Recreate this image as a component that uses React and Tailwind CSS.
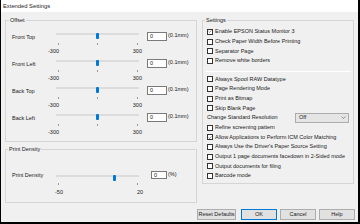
import React from "react";

// ================= SLIDER ROW =================
function SliderRow({ label, min, max, thumb, ticks, unit, dense }) {
  return (
    <div className={`flex items-start ${dense ? "h-[32px]" : "h-[27px]"}`}>
      <div className={`w-[44px] leading-[7px] ${dense ? "pt-[1px]" : "pt-[2px]"}`}>
        {label}
      </div>
      <div className={`w-[83px] ${dense ? "mt-[2px]" : ""}`}>
        <div className="relative h-[6px]">
          <div className="mt-[1.5px] h-[2px] bg-[#dcdcdc]" />
          <div
            className="absolute top-0 h-[6px] w-[3px] rounded-[1px] bg-[#0078d7]"
            style={{ left: thumb }}
          />
        </div>
        <div className={`flex justify-between px-[1.5px] ${dense ? "mt-[2px]" : "mt-[4px]"}`}>
          {ticks.map((t) => (
            <span key={t} className="h-[2px] w-[1px] bg-[#9a9a9a]" />
          ))}
        </div>
        <div
          className={`flex justify-between leading-[7px] ${
            dense ? "mt-[4px] ml-[-1px] mr-[-4px]" : "mt-[3px] ml-[-8px] mr-[-3px]"
          }`}
        >
          <span>{min}</span>
          <span>{max}</span>
        </div>
      </div>
      <div
        className={`flex items-center border border-[#7a7a7a] bg-white pl-[2px] leading-[7px] ${
          dense ? "ml-[12px] h-[8px] w-[16px]" : "ml-[8px] h-[9px] w-[20px]"
        }`}
      >
        0
      </div>
      <div className="ml-[1px] leading-[7px]">{unit}</div>
    </div>
  );
}

// ================= CHECKBOX =================
function Check({ label, checked }) {
  return (
    <div className="flex h-[9.6px] items-center pl-[4px]">
      <span className="flex h-[6px] w-[6px] items-center justify-center border border-[#333333] bg-white">
        {checked && (
          <svg viewBox="0 0 6 6" className="h-[5px] w-[5px]">
            <path
              d="M0.9 3 L2.3 4.4 L5.1 1.3"
              fill="none"
              stroke="#333333"
              strokeWidth="0.8"
            />
          </svg>
        )}
      </span>
      <span className="ml-[2px] leading-[7px]">{label}</span>
    </div>
  );
}

const offsetRows = ["Front Top", "Front Left", "Back Top", "Back Left"];

const settingsTop = [
  { label: "Enable EPSON Status Monitor 3", checked: true },
  { label: "Check Paper Width Before Printing" },
  { label: "Separator Page" },
  { label: "Remove white borders" },
];

const settingsMid = [
  { label: "Always Spool RAW Datatype" },
  { label: "Page Rendering Mode" },
  { label: "Print as Bitmap" },
  { label: "Skip Blank Page" },
];

const settingsBottom = [
  { label: "Refine screening pattern" },
  { label: "Allow Applications to Perform ICM Color Matching", checked: true },
  { label: "Always Use the Driver's Paper Source Setting" },
  { label: "Output 1 page documents facedown in 2-Sided mode" },
  { label: "Output documents for filing" },
  { label: "Barcode mode" },
];

export default function App() {
  return (
    <div className="flex h-[224px] w-[360px] flex-col border-b-2 border-l border-r-2 border-black bg-[#f0f0f0] font-['Liberation_Sans',Arial,sans-serif] text-[5.5px] text-[#1a1a1a]">
      {/* TITLE */}
      <div className="flex h-[12px] shrink-0 items-center bg-white pl-[2px] text-[5.8px]">
        Extended Settings
      </div>

      {/* BODY */}
      <div className="flex pl-[4px] pt-[4.5px]">
        <div className="flex w-[192px] flex-col">
          <fieldset className="h-[125.5px] border border-[#d5d5d5]">
            <legend className="ml-[3px] px-[1px] leading-[7px]">Offset</legend>
            <div className="mt-[8px] pl-[6px]">
              {offsetRows.map((r) => (
                <SliderRow
                  key={r}
                  label={r}
                  min="-300"
                  max="300"
                  thumb={40}
                  ticks={[0, 1, 2]}
                  unit="(0.1mm)"
                />
              ))}
            </div>
          </fieldset>

          <fieldset className="mt-[3.5px] h-[57.5px] border border-[#d5d5d5]">
            <legend className="ml-[2px] px-[1px] leading-[7px]">Print Density</legend>
            <div className="mt-[18.5px] pl-[6px]">
              <SliderRow
                label="Print Density"
                min="-50"
                max="20"
                thumb={57}
                ticks={[0, 1]}
                unit="(%)"
                dense
              />
            </div>
          </fieldset>
        </div>

        <fieldset className="ml-[5px] h-[167.5px] w-[152px] border border-[#d5d5d5]">
          <legend className="ml-[2px] px-[1px] leading-[7px]">Settings</legend>
          <div className="mt-[3.7px]">
            {settingsTop.map((s) => (
              <Check key={s.label} {...s} />
            ))}
          </div>
          <div className="mx-[2px] mt-[5.4px] h-[1px] border-b border-white bg-[#d5d5d5]" />
          <div className="mt-[2.6px]">
            {settingsMid.map((s) => (
              <Check key={s.label} {...s} />
            ))}
            <div className="flex h-[10px] items-center justify-between pl-[4px] pr-[4px]">
              <span className="leading-[7px]">Change Standard Resolution</span>
              <div className="flex h-[10px] w-[54px] items-center justify-between border border-[#acacac] bg-[#e5e5e5] pl-[3px] pr-[2px]">
                <span className="leading-[7px]">Off</span>
                <svg viewBox="0 0 6 4" className="h-[3px] w-[5px]">
                  <path d="M0.5 0.8 L3 3.2 L5.5 0.8" fill="none" stroke="#444444" strokeWidth="0.7" />
                </svg>
              </div>
            </div>
            {settingsBottom.map((s) => (
              <Check key={s.label} {...s} />
            ))}
          </div>
        </fieldset>
      </div>

      {/* BUTTONS */}
      <div className="mt-[6px] flex justify-end pr-[3px]">
        <button className="h-[11px] w-[39px] border border-[#adadad] bg-[#e1e1e1] leading-[7px]">
          Reset Defaults
        </button>
        <button className="ml-[5px] h-[11px] w-[36px] border border-[#0078d7] bg-[#e1e1e1] leading-[7px]">
          OK
        </button>
        <button className="ml-[3px] h-[11px] w-[36px] border border-[#adadad] bg-[#e1e1e1] leading-[7px]">
          Cancel
        </button>
        <button className="ml-[3px] h-[11px] w-[36px] border border-[#adadad] bg-[#e1e1e1] leading-[7px]">
          Help
        </button>
      </div>
    </div>
  );
}
